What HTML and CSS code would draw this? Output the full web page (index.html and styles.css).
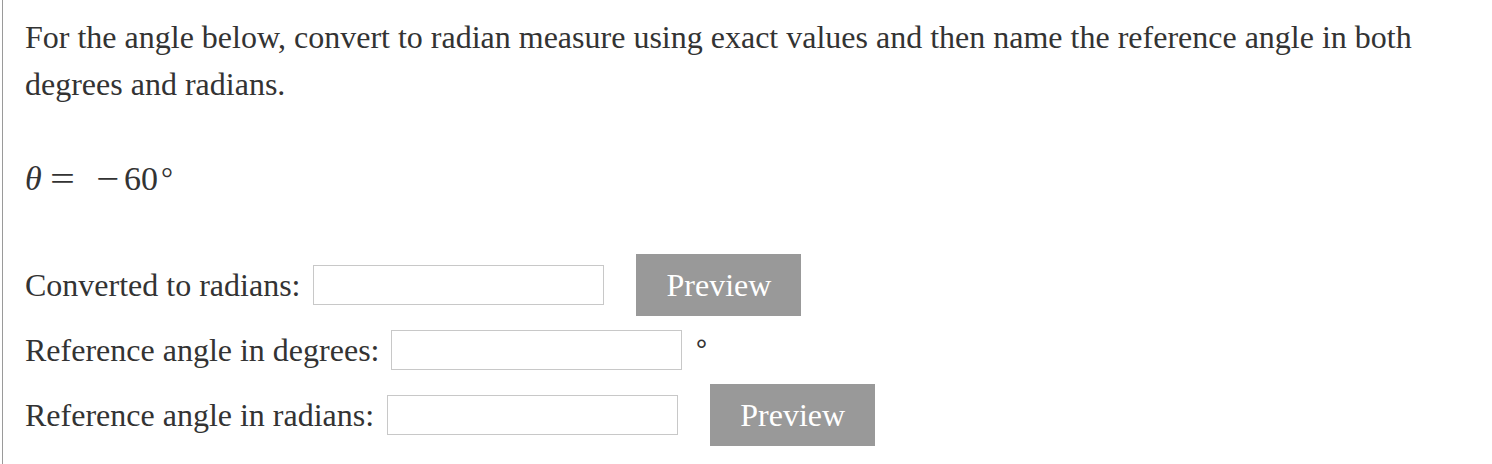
FILE: index.html
```html
<!DOCTYPE html>
<html>
<head>
<meta charset="utf-8">
<link rel="stylesheet" href="styles.css">
</head>
<body>
<div class="frame">
  <p class="prompt">For the angle below, convert to radian measure using exact values and then name the reference angle in both degrees and radians.</p>
  <p class="math"><span class="theta">θ</span><span class="eq">=</span><span class="minus">−</span><span class="num">60</span><span class="deg">°</span></p>
  <div class="rows">
    <div class="row">
      <label class="lbl">Converted to radians:</label>
      <input class="field f1" type="text">
      <button class="preview p1">Preview</button>
    </div>
    <div class="row">
      <label class="lbl">Reference angle in degrees:</label>
      <input class="field f2" type="text">
      <span class="unit">°</span>
    </div>
    <div class="row">
      <label class="lbl">Reference angle in radians:</label>
      <input class="field f3" type="text">
      <button class="preview p3">Preview</button>
    </div>
  </div>
</div>
</body>
</html>
```
FILE: styles.css
```css
html, body {
  margin: 0;
  padding: 0;
  background: #fff;
}
body {
  padding-left: 2px;
  font-family: "Liberation Serif", "Times New Roman", serif;
  color: #333;
}
.frame {
  border-left: 1px solid #9a9a9a;
  padding: 14px 0 0 22px;
  min-height: 464px;
  box-sizing: border-box;
}
.prompt {
  margin: 0;
  font-size: 32px;
  line-height: 47px;
  width: 1440px;
}
.math {
  margin: 50px 0 0 0;
  display: flex;
  align-items: baseline;
  font-size: 34px;
  line-height: 42px;
  height: 42px;
}
.theta {
  font-style: italic;
  width: 25px;
}
.eq {
  width: 46px;
  transform: scaleX(1.3);
  transform-origin: left center;
}
.minus {
  width: 28px;
  transform: scaleX(1.2);
  transform-origin: left center;
}
.num {
  width: 37px;
}
.deg {
  font-size: 30px;
  position: relative;
  top: -2px;
}
.rows {
  margin-top: 54px;
  display: flex;
  flex-direction: column;
  gap: 3px;
}
.row {
  display: flex;
  align-items: center;
  height: 62px;
  font-size: 32px;
}
.lbl {
  white-space: nowrap;
}
.field {
  width: 291px;
  height: 40px;
  box-sizing: border-box;
  border: 1px solid #c8c8c8;
  margin: 0;
  padding: 0;
  background: #fff;
}
.f1 { margin-left: 13px; }
.f2 { margin-left: 12px; }
.f3 { margin-left: 13px; }
.preview {
  width: 165px;
  height: 62px;
  border: 0;
  margin: 0 0 0 32px;
  background: #999;
  color: #fff;
  font-family: "Liberation Serif", "Times New Roman", serif;
  font-size: 32px;
  padding: 0;
}
.unit {
  margin-left: 13px;
  align-self: flex-start;
  margin-top: 16px;
  line-height: 1;
  font-family: "Liberation Sans", Arial, sans-serif;
  font-size: 30px;
}
```
